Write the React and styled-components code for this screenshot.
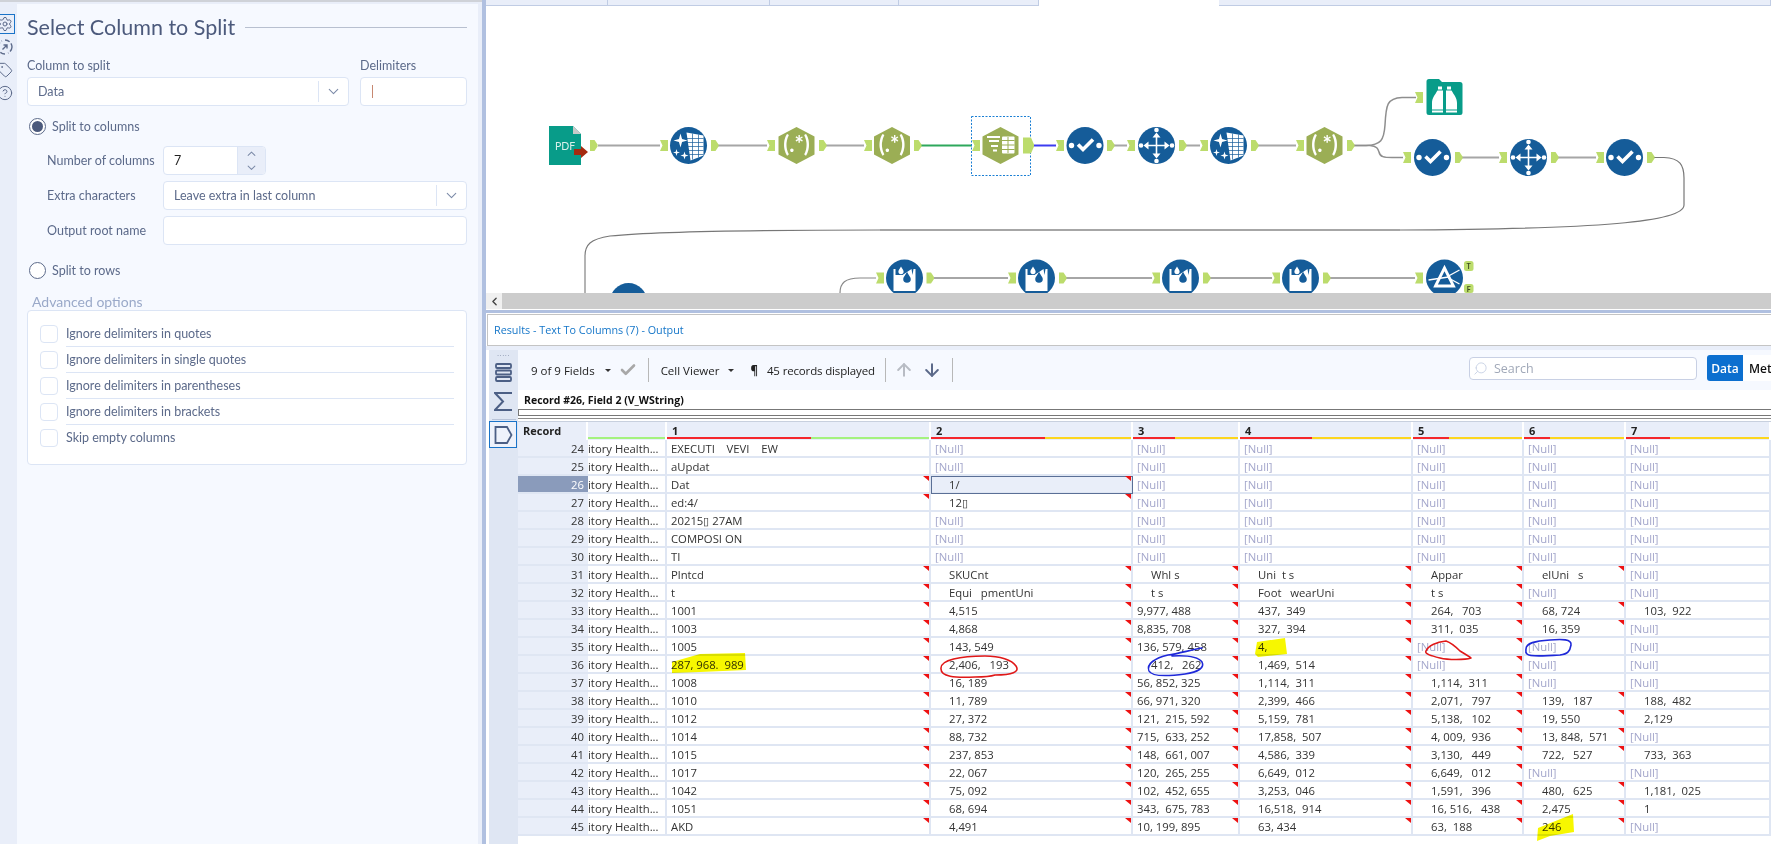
import React from 'react';
import styled, { createGlobalStyle } from 'styled-components';
import { ArrowDown, ArrowUp, Check, ChevronDown, ChevronLeft, ChevronUp, CircleHelp, Search, Settings, Tag } from 'lucide-react';

const GlobalStyle = createGlobalStyle`
  html, body { margin: 0; padding: 0; background: #fff; }
  * { box-sizing: border-box; }
`;

const Page = styled.div`
  position: relative;
  display: flex;
  width: 1771px;
  height: 844px;
  overflow: hidden;
  background: #fff;
`;

/* ---------- left config panel ---------- */
const LeftPane = styled.div`
  display: flex;
  flex: 0 0 482px;
  background: #e9eef9;
  border-top: 2px solid #cfd2d8;
  font-family: Lato, sans-serif;
  color: #5c6a8a;
`;

const Rail = styled.div`
  flex: 0 0 17px;
  display: flex;
  flex-direction: column;
  align-items: flex-start;
  padding-top: 12px;
  gap: 3px;
  color: #5c6a8a;
`;

const RailIcon = styled.div`
  width: 15px;
  height: 20px;
  display: flex;
  align-items: center;
  justify-content: flex-start;
  overflow: hidden;
  border: ${({ $active }) => ($active ? '1px solid #1a73c8' : '1px solid transparent')};
  border-left: none;
  svg { flex-shrink: 0; margin-left: -3px; }
`;

const Settings2 = styled.div`
  flex: 0 0 461px;
  margin-top: 2px;
  padding: 8px 11px 0 10px;
  background: #f6f9ff;
`;

const TitleRow = styled.div`
  display: flex;
  align-items: center;
  gap: 10px;
  height: 30px;
`;

const Title = styled.h1`
  margin: 0;
  font-size: 21.5px;
  font-weight: 400;
  color: #4c5a7c;
  white-space: nowrap;
`;

const TitleLine = styled.div`
  flex: 1;
  height: 1px;
  background: #b8c0d0;
`;

const TopRow = styled.div`
  display: grid;
  grid-template-columns: 322px 107px;
  column-gap: 11px;
  margin-top: 16px;
`;

const FieldLabel = styled.div`
  height: 16px;
  margin-bottom: 3px;
  font-size: 12.5px;
  line-height: 16px;
`;

const Control = styled.div`
  display: flex;
  align-items: center;
  height: 29px;
  background: #fff;
  border: 1px solid #dce5f5;
  border-radius: 4px;
  font-size: 12.5px;
  color: #5c6a8a;
  overflow: hidden;
`;

const ControlText = styled.span`
  flex: 1;
  padding-left: 10px;
`;

const Caret = styled.span`
  color: #c0795f;
  font-weight: 400;
`;

const SelectArrow = styled.div`
  flex: 0 0 30px;
  height: 21px;
  display: flex;
  align-items: center;
  justify-content: center;
  border-left: 1px solid #dce5f5;
  color: #7c8ba8;
`;

const RadioRow = styled.div`
  display: flex;
  align-items: center;
  gap: 6px;
  height: 17px;
  margin-top: ${({ $top }) => $top}px;
  padding-left: 2px;
  font-size: 12.5px;
`;

const Radio = styled.span`
  width: 17px;
  height: 17px;
  display: flex;
  align-items: center;
  justify-content: center;
  border: 1px solid #5c6a8a;
  border-radius: 50%;
  background: #fff;
  &::after {
    content: '';
    display: ${({ $on }) => ($on ? 'block' : 'none')};
    width: 11px;
    height: 11px;
    border-radius: 50%;
    background: #4c5a7c;
  }
`;

const OptionGrid = styled.div`
  display: grid;
  grid-template-columns: 116px 1fr;
  row-gap: 6px;
  align-items: center;
  margin-top: 11px;
  padding-left: 20px;
  font-size: 12.5px;
`;

const SpinWrap = styled(Control)`
  width: 103px;
`;

const SpinButtons = styled.div`
  flex: 0 0 28px;
  height: 100%;
  display: flex;
  flex-direction: column;
  align-items: center;
  justify-content: space-around;
  background: #e9eef9;
  border-left: 1px solid #dce5f5;
  color: #7c8ba8;
`;

const SevenText = styled(ControlText)`
  color: #222;
`;

const AdvancedLabel = styled.div`
  height: 16px;
  margin-top: 15px;
  padding-left: 5px;
  font-size: 14px;
  line-height: 16px;
  color: #9aa9c9;
`;

const AdvancedBox = styled.div`
  height: 155px;
  padding: 10px 12px 0;
  background: #fff;
  border: 1px solid #dce5f5;
  border-radius: 4px;
`;

const CheckRow = styled.div`
  display: flex;
  align-items: center;
  gap: 8px;
  height: 26px;
  font-size: 12.5px;
`;

const CheckBox = styled.span`
  flex: 0 0 18px;
  height: 18px;
  border: 1px solid #dce5f5;
  border-radius: 4px;
  background: #fff;
`;

const CheckLabel = styled.div`
  flex: 1;
  height: 26px;
  line-height: 25px;
  border-bottom: ${({ $last }) => ($last ? 'none' : '1px solid #dce5f5')};
`;

const PaneSplit = styled.div`
  flex: 0 0 4px;
  background: #b0c0e0;
`;

/* ---------- right side ---------- */
const RightPane = styled.div`
  flex: 1;
  display: flex;
  flex-direction: column;
  min-width: 0;
`;

const TabStrip = styled.div`
  display: flex;
  height: 6px;
  flex: 0 0 6px;
`;

const Tab = styled.div`
  flex: ${({ $w }) => ($w ? `0 0 ${$w}px` : '1')};
  background: ${({ $active }) => ($active ? '#fff' : '#e9eef9')};
  border-bottom: ${({ $active }) => ($active ? 'none' : '1px solid #c0cce4')};
  border-right: ${({ $active }) => ($active ? 'none' : '1px solid #c0cce4')};
`;

const CanvasSvg = styled.svg`
  display: block;
  flex: 0 0 287px;
  width: 1285px;
  height: 287px;
`;

const HScroll = styled.div`
  display: flex;
  flex: 0 0 16px;
  background: #ccc;
`;

const HScrollBtn = styled.div`
  flex: 0 0 16px;
  display: flex;
  align-items: center;
  justify-content: center;
  background: #f0f0f0;
  color: #444;
`;

const HSplit = styled.div`
  flex: 0 0 3px;
  margin-top: 1px;
  background: #b0c0e0;
`;

const ResultsTitle = styled.div`
  flex: 0 0 32px;
  margin: 1px 0 0 1px;
  padding-left: 6px;
  border-top: 1px solid #c4c4c4;
  border-left: 1px solid #c4c4c4;
  border-bottom: 1px solid #c4c4c4;
  font-family: "Open Sans", sans-serif;
  font-size: 10.8px;
  line-height: 30px;
  color: #1576c9;
`;

const ResultsBody = styled.div`
  flex: 1;
  display: flex;
  padding-left: 3px;
  border-top: 4px solid #e9eef9;
  min-height: 0;
  font-family: "Open Sans", sans-serif;
`;

const SideRail = styled.div`
  flex: 0 0 29px;
  display: flex;
  flex-direction: column;
  align-items: center;
  background: #dfe6f3;
  color: #4c5f85;
`;

const Grip = styled.div`
  width: 18px;
  height: 10px;
  font-size: 8px;
  line-height: 6px;
  letter-spacing: 0.5px;
  color: #8a96ae;
  text-align: center;
  overflow: hidden;
`;

const SideBtn = styled.div`
  width: 28px;
  height: ${({ $h }) => $h}px;
  margin-left: ${({ $active }) => ($active ? '-1px' : '0')};
  display: flex;
  align-items: center;
  justify-content: center;
  border: ${({ $active }) => ($active ? '1px solid #1a73c8' : 'none')};
  background: ${({ $active }) => ($active ? '#eef2fb' : 'transparent')};
`;

const SideSep = styled.div`
  width: 24px;
  height: 1px;
  margin: 1px 0;
  background: #b8c3d8;
`;

const ResultsMain = styled.div`
  flex: 1;
  min-width: 0;
  display: flex;
  flex-direction: column;
`;

const Toolbar = styled.div`
  flex: 0 0 40px;
  display: flex;
  align-items: center;
  padding-left: 13px;
  background: #f6f9ff;
  font-size: 11.5px;
  color: #222;
  overflow: hidden;
`;

const ToolText = styled.span`
  margin-left: ${({ $ml }) => $ml || 0}px;
  letter-spacing: ${({ $tight }) => ($tight ? '-0.15px' : 'normal')};
  font-weight: ${({ $bold }) => ($bold ? 700 : 400)};
  white-space: nowrap;
`;

const MiniCaret = styled.span`
  width: 0;
  height: 0;
  margin-left: ${({ $ml }) => $ml}px;
  border-left: 3px solid transparent;
  border-right: 3px solid transparent;
  border-top: 3px solid #333;
`;

const ToolDivider = styled.div`
  width: 1px;
  height: 24px;
  margin-left: ${({ $ml }) => $ml}px;
  background: #b8b8b8;
`;

const ToolIcon = styled.span`
  display: flex;
  margin-left: ${({ $ml }) => $ml}px;
  color: ${({ $color }) => $color};
`;

const ToolRight = styled.div`
  flex-shrink: 0;
  display: flex;
  align-items: center;
  margin: -4px -12px 0 auto;
`;

const SearchBox = styled.div`
  width: 228px;
  height: 23px;
  display: flex;
  align-items: center;
  gap: 6px;
  padding-left: 3px;
  background: #fff;
  border: 1px solid #c8d0e4;
  border-radius: 4px;
  color: #a0a8b8;
  font-size: 12.5px;
  svg { color: #cdd6e8; transform: scaleX(-1); }
`;

const ViewBtn = styled.div`
  height: 26px;
  width: ${({ $w }) => $w}px;
  margin-left: ${({ $ml }) => $ml || 0}px;
  display: flex;
  align-items: center;
  justify-content: ${({ $on }) => ($on ? 'center' : 'flex-start')};
  padding-left: ${({ $on }) => ($on ? 0 : 6)}px;
  background: ${({ $on }) => ($on ? '#0c6fcf' : '#fff')};
  border-radius: ${({ $on }) => ($on ? '3px 0 0 3px' : '0')};
  color: ${({ $on }) => ($on ? '#fff' : '#111')};
  font-size: 12px;
  font-weight: 600;
`;

const CellViewer = styled.div`
  flex: 0 0 31px;
  background: #fff;
`;

const CellCaption = styled.div`
  height: 19px;
  padding-left: 6px;
  font-size: 10.5px;
  font-weight: 700;
  line-height: 20px;
  color: #111;
`;

const CellBar = styled.div`
  height: 7px;
  background: #fff;
  border: 1px solid #777;
  border-right: none;
`;

const CellRule = styled.div`
  height: 1px;
  margin-top: 2px;
  background: #8a8a8a;
`;

const GRID_COLS = '70px 79px 264px 202px 107px 173px 111px 102px 145px';

const HeadRow = styled.div`
  flex: 0 0 19px;
  display: grid;
  grid-template-columns: ${GRID_COLS};
  background: #fff;
  border-top: 1px solid #c8d0de;
`;

const HeadCell = styled.div`
  position: relative;
  height: 18px;
  padding-left: ${({ $pad }) => $pad}px;
  margin-right: 2px;
  background: #e9eef9;
  font-size: 11px;
  font-weight: 700;
  line-height: 17px;
  color: #222;
`;

const Bar = styled.div`
  position: absolute;
  left: 0;
  right: 0;
  bottom: 1px;
  height: 2px;
  background: linear-gradient(
    to right,
    #f5262c ${({ $red }) => $red}%,
    ${({ $rest }) => $rest} ${({ $red }) => $red}%
  );
`;

const GridBody = styled.div`
  flex: 1;
  display: grid;
  grid-template-columns: ${GRID_COLS};
  grid-auto-rows: 18px;
  font-size: 11.3px;
  color: #333;
`;

const RecordCell = styled.div`
  padding-right: 4px;
  background: ${({ $sel }) => ($sel ? '#8a9bbb' : '#e9eef9')};
  color: ${({ $sel }) => ($sel ? '#fff' : '#333')};
  border-bottom: 2px solid #dfe6f3;
  text-align: right;
  line-height: 18px;
`;

const DataCell = styled.div`
  position: relative;
  padding-left: ${({ $pad }) => $pad}px;
  background: ${({ $sel }) => ($sel ? '#e9eef9' : '#fff')};
  border-right: 2px solid #dfe6f3;
  border-bottom: 2px solid #dfe6f3;
  outline: ${({ $sel }) => ($sel ? '1px solid #5a6f96' : 'none')};
  outline-offset: -1px;
  color: ${({ $null }) => ($null ? '#a3a6cb' : '#333')};
  line-height: 18px;
  white-space: pre;
  overflow: hidden;
`;

const SourceCell = styled(DataCell)`
  text-indent: -2px;
`;

const Flag = styled.span`
  position: absolute;
  top: 0;
  right: 0;
  width: 0;
  height: 0;
  border-top: 5px solid #ee1111;
  border-left: 6px solid transparent;
`;

const Overlay = styled.svg`
  position: absolute;
  top: 0;
  left: 0;
  pointer-events: none;
`;

const YellowMark = styled.path`
  fill: #f7f700;
  mix-blend-mode: multiply;
`;

const PenMark = styled.path`
  fill: none;
  stroke: ${({ $color }) => $color};
  stroke-width: 1.6;
  stroke-linecap: round;
  stroke-linejoin: round;
`;

/* ---------- workflow drawing ---------- */
const GREEN = '#bcdc6c';
const BLUE = '#155c99';
const OLIVE = '#9bae55';
const WIRE = '#a6a6a6';

const InAnchor = ({ x, y }) => (
  <path d={`M${x} ${y - 5.5}H${x + 8}V${y + 5.5}H${x}L${x + 2.5} ${y}Z`} fill={GREEN} />
);

const OutAnchor = ({ x, y, big }) => {
  const h = big ? 8 : 5.5;
  const w = big ? 11 : 7.5;
  return <path d={`M${x} ${y - h}H${x + w - 3}L${x + w} ${y - 1}V${y + 1}L${x + w - 3} ${y + h}H${x}Z`} fill={GREEN} />;
};

const Wire = ({ d, color = WIRE, w = 2 }) => <path d={d} fill="none" stroke={color} strokeWidth={w} />;

const Circle = ({ cx, cy, children }) => (
  <g>
    <circle cx={cx} cy={cy} r="18.5" fill={BLUE} />
    {children}
  </g>
);

const Hex = ({ cx, cy, children }) => (
  <g>
    <polygon points={`${cx},${cy - 18.5} ${cx + 18},${cy - 9} ${cx + 18},${cy + 9} ${cx},${cy + 18.5} ${cx - 18},${cy + 9} ${cx - 18},${cy - 9}`} fill={OLIVE} />
    {children}
  </g>
);

const Formula = ({ cx, cy }) => (
  <Hex cx={cx} cy={cy}>
    <text x={cx} y={cy + 6} textAnchor="middle" fontFamily="Lato, sans-serif" fontSize="22" fontWeight="700" fill="#fff">(.*)</text>
  </Hex>
);

const Sparkle = ({ x, y, s }) => (
  <path d={`M${x} ${y - s}L${x + s * 0.22} ${y - s * 0.22}L${x + s} ${y}L${x + s * 0.22} ${y + s * 0.22}L${x} ${y + s}L${x - s * 0.22} ${y + s * 0.22}L${x - s} ${y}L${x - s * 0.22} ${y - s * 0.22}Z`} fill="#fff" />
);

const CleanseTable = ({ cx, cy }) => (
  <Circle cx={cx} cy={cy}>
    <Sparkle x={cx - 8} y={cy - 5} s={7} />
    <Sparkle x={cx - 12} y={cy + 7} s={3.5} />
    <Sparkle x={cx - 4} y={cy + 10} s={4} />
    <path d={`M${cx - 2} ${cy - 13}L${cx + 15} ${cy - 10}V${cy + 10}L${cx + 2} ${cy + 15}Z`} fill="#fff" />
    {[-7, -3, 1, 5, 9].map((o) => (
      <path key={o} d={`M${cx - 2} ${cy + o}H${cx + 15}`} stroke={BLUE} strokeWidth="0.7" />
    ))}
    <path d={`M${cx + 4} ${cy - 12}V${cy + 14}M${cx + 10} ${cy - 11}V${cy + 12}`} stroke={BLUE} strokeWidth="0.7" />
  </Circle>
);

const SelectNode = ({ cx, cy }) => (
  <Circle cx={cx} cy={cy}>
    <circle cx={cx - 13.5} cy={cy} r="2.7" fill="#fff" />
    <circle cx={cx + 14} cy={cy} r="2.7" fill="#fff" />
    <path d={`M${cx - 7} ${cy - 1}L${cx - 2} ${cy + 4}L${cx + 8} ${cy - 6}`} fill="none" stroke="#fff" strokeWidth="3.6" />
  </Circle>
);

const MoveNode = ({ cx, cy }) => (
  <Circle cx={cx} cy={cy}>
    <path d={`M${cx} ${cy - 11}V${cy + 11}M${cx - 11} ${cy}H${cx + 11}`} stroke="#fff" strokeWidth="1.6" />
    <path d={`M${cx - 4} ${cy - 8}L${cx} ${cy - 13}L${cx + 4} ${cy - 8}ZM${cx - 4} ${cy + 8}L${cx} ${cy + 13}L${cx + 4} ${cy + 8}ZM${cx - 8} ${cy - 4}L${cx - 13} ${cy}L${cx - 8} ${cy + 4}ZM${cx + 8} ${cy - 4}L${cx + 13} ${cy}L${cx + 8} ${cy + 4}Z`} fill="#fff" />
    <circle cx={cx} cy={cy - 15.5} r="2.3" fill="#fff" />
    <circle cx={cx} cy={cy + 15.5} r="2.3" fill="#fff" />
    <circle cx={cx - 15.5} cy={cy} r="2.3" fill="#fff" />
    <circle cx={cx + 15.5} cy={cy} r="2.3" fill="#fff" />
  </Circle>
);

const Drop = ({ x, y, s, fill }) => (
  <path d={`M${x} ${y - s * 1.5}C${x + s * 0.4} ${y - s * 0.6} ${x + s} ${y - s * 0.1} ${x + s} ${y + s * 0.4}A${s} ${s} 0 0 1 ${x - s} ${y + s * 0.4}C${x - s} ${y - s * 0.1} ${x - s * 0.4} ${y - s * 0.6} ${x} ${y - s * 1.5}Z`} fill={fill} />
);

const WaterNode = ({ cx, cy }) => (
  <Circle cx={cx} cy={cy}>
    <path d={`M${cx - 11} ${cy - 9}H${cx - 9}V${cy - 3}H${cx - 2}L${cx + 7} ${cy - 9}L${cx + 8} ${cy - 3}L${cx + 9} ${cy - 9}H${cx + 11}V${cy + 13}H${cx - 11}Z`} fill="#fff" />
    <Drop x={cx - 3.5} y={cy - 7.5} s={2.6} fill="#fff" />
    <Drop x={cx + 2.5} y={cy - 0.5} s={3.8} fill={BLUE} />
  </Circle>
);

const FilterNode = ({ cx, cy }) => (
  <Circle cx={cx} cy={cy}>
    <path d={`M${cx - 9} ${cy + 8}L${cx} ${cy - 10}L${cx + 9} ${cy + 8}Z`} fill="none" stroke="#fff" strokeWidth="2.8" />
    <path d={`M${cx - 16} ${cy + 2}L${cx + 4} ${cy - 1}M${cx + 4} ${cy - 2}L${cx + 15} ${cy - 8}M${cx + 4} ${cy}L${cx + 15} ${cy + 6}`} stroke="#fff" strokeWidth="1.4" />
  </Circle>
);

const Workflow = () => (
  <CanvasSvg viewBox="486 6 1285 287">
    <Wire d="M598 145.5H660M718 145.5H767M826 145.5H864M1114 145.5H1127M1186 145.5H1200M1258 145.5H1296" />
    <Wire d="M921 145.5H972" color="#2ea85c" />
    <Wire d="M1034 145.5H1056" color="#3c3cf0" />
    <Wire d="M1354 145.5H1366C1381 145 1384 140 1385 125C1386 105 1387 98 1402 97.5H1416" w={1.5} color="#8e8e8e" />
    <Wire d="M1354 145.5H1370C1377 146 1378 149 1379 152C1380 157 1384 157.5 1392 157.5H1403" w={1.5} color="#8e8e8e" />
    <Wire d="M1462 157.5H1499M1558 157.5H1596" />
    <Wire d="M1654 157.5H1664C1680 158 1684 165 1684 178V205C1684 222 1600 229 1400 230" w={1.2} color="#777" />
    <Wire d="M1400 230H880" />
    <Wire d="M880 230C700 230 640 233 610 236C590 239 585 245 585 256V293" w={1.1} color="#777" />
    <Wire d="M840 293C840 283 845 278 860 278H876" w={1.2} color="#888" />
    <Wire d="M933 278H1008M1065 278H1152M1209 278H1272M1329 278H1415" />

    <path d="M549 126H573L581 134V165H549Z" fill="#089c89" />
    <path d="M573 126L581 134H573Z" fill="#c9c9c9" />
    <text x="555" y="150" fontFamily="Lato, sans-serif" fontSize="10.5" fill="#d8f0ea">PDF</text>
    <path d="M574 149H581V146L588 152L581 158V155H574Z" fill="#a52a10" />
    <OutAnchor x={590} y={145.5} />

    <InAnchor x={660} y={145.5} />
    <CleanseTable cx={688.5} cy={145.5} />
    <OutAnchor x={711} y={145.5} />

    <InAnchor x={767} y={145.5} />
    <Formula cx={796.5} cy={145.5} />
    <OutAnchor x={819} y={145.5} />

    <InAnchor x={864} y={145.5} />
    <Formula cx={892} cy={145.5} />
    <OutAnchor x={914} y={145.5} />

    <rect x="971.5" y="116.5" width="59" height="59" fill="none" stroke="#1a7fd4" strokeDasharray="2 1.5" />
    <InAnchor x={972} y={145.5} />
    <Hex cx={1000.5} cy={145.5}>
      <path d="M987 137H1000M989 141H999M991 146H998M993 150.5H997" stroke="#fff" strokeWidth="2" />
      <rect x="1002" y="136.5" width="12.5" height="17" rx="1" fill="#fff" />
      <path d="M1002 140.5H1014.5M1002 145H1014.5M1002 149.5H1014.5M1008 137V153" stroke={OLIVE} strokeWidth="1" />
    </Hex>
    <OutAnchor x={1023} y={145.5} big />

    <InAnchor x={1056} y={145.5} />
    <SelectNode cx={1085} cy={145.5} />
    <OutAnchor x={1107} y={145.5} />

    <InAnchor x={1127} y={145.5} />
    <MoveNode cx={1156.5} cy={145.5} />
    <OutAnchor x={1179} y={145.5} />

    <InAnchor x={1200} y={145.5} />
    <CleanseTable cx={1228.5} cy={145.5} />
    <OutAnchor x={1251} y={145.5} />

    <InAnchor x={1296} y={145.5} />
    <Formula cx={1324.5} cy={145.5} />
    <OutAnchor x={1347} y={145.5} />

    <InAnchor x={1415} y={97.5} />
    <path d="M1429 79H1439L1442 82H1460A2.5 2.5 0 0 1 1462.5 84.5V112.5A2.5 2.5 0 0 1 1460 115H1429A2.5 2.5 0 0 1 1426.5 112.5V81.5A2.5 2.5 0 0 1 1429 79Z" fill="#089c89" />
    <path d="M1438 86.5H1442V89.5H1438ZM1447 86.5H1451V89.5H1447Z" fill="#fff" />
    <path d="M1437.5 90.5H1443V109.5H1432V103C1432 98 1435 95 1437.5 90.5ZM1451.5 90.5H1446V109.5H1457V103C1457 98 1454 95 1451.5 90.5Z" fill="#fff" />
    <path d="M1432 110.5H1443V112.5H1432ZM1446 110.5H1457V112.5H1446Z" fill="#fff" />

    <InAnchor x={1403} y={157.5} />
    <SelectNode cx={1432.5} cy={157.5} />
    <OutAnchor x={1455} y={157.5} />
    <InAnchor x={1499} y={157.5} />
    <MoveNode cx={1528.5} cy={157.5} />
    <OutAnchor x={1551} y={157.5} />
    <InAnchor x={1596} y={157.5} />
    <SelectNode cx={1624.5} cy={157.5} />
    <OutAnchor x={1647} y={157.5} />

    <circle cx="628.5" cy="301.5" r="18.5" fill={BLUE} />

    <InAnchor x={876} y={278} />
    <WaterNode cx={904.5} cy={278} />
    <OutAnchor x={926.5} y={278} />
    <InAnchor x={1008} y={278} />
    <WaterNode cx={1036.5} cy={278} />
    <OutAnchor x={1059} y={278} />
    <InAnchor x={1152} y={278} />
    <WaterNode cx={1180.5} cy={278} />
    <OutAnchor x={1203} y={278} />
    <InAnchor x={1272} y={278} />
    <WaterNode cx={1300.5} cy={278} />
    <OutAnchor x={1323} y={278} />
    <InAnchor x={1415} y={278} />
    <FilterNode cx={1444.5} cy={278} />
    <rect x="1464" y="261" width="9.5" height="10" rx="2.5" fill={GREEN} />
    <text x="1468.7" y="269" textAnchor="middle" fontFamily="Lato, sans-serif" fontSize="7" fontWeight="700" fill="#3c4a20">T</text>
    <rect x="1464" y="284" width="9.5" height="9" rx="2.5" fill={GREEN} />
    <text x="1468.7" y="292" textAnchor="middle" fontFamily="Lato, sans-serif" fontSize="7" fontWeight="700" fill="#3c4a20">F</text>
  </CanvasSvg>
);

const Scribbles = () => (
  <Overlay width="1771" height="844" viewBox="0 0 1771 844">
    <YellowMark d="M672 662L700 654L745 653L746 670L700 672L672 673Z" />
    <YellowMark d="M1257 642L1285 638L1287 654L1258 657L1255 654Z" />
    <YellowMark d="M1538 828L1573 814L1574 832L1550 836L1537 841Z" />
    <PenMark $color="#e01818" d="M941 668C941 660 960 656 985 656C1000 656 1012 660 1016 666C1020 672 1012 675 995 675C992 676 985 677 975 677C955 678 940 677 941 668" />
    <PenMark $color="#e01818" d="M1426 651C1428 646 1436 642 1446 641C1452 643 1456 647 1460 651C1465 654 1470 657 1471 658C1465 660 1448 660 1440 658C1432 656 1424 654 1426 651" />
    <PenMark $color="#1e28d8" d="M1202 648C1190 650 1178 654 1168 655C1155 658 1146 664 1149 671C1152 677 1170 676 1185 674C1198 672 1205 668 1202 662C1199 658 1190 655 1172 656" />
    <PenMark $color="#1e28d8" d="M1526 649C1526 643 1535 641 1550 640C1562 639 1572 639 1571 645C1570 651 1568 654 1560 655C1545 656 1530 657 1527 654C1525 652 1526 650 1526 649" />
  </Overlay>
);

/* ---------- data ---------- */
const NA = null;
const TABLE = [
  [24, 'EXECUTI    VEVI    EW', NA, NA, NA, NA, NA, NA],
  [25, 'aUpdat', NA, NA, NA, NA, NA, NA],
  [26, 'Dat', '~1/', NA, NA, NA, NA, NA],
  [27, 'ed:4/', '~12\u25AF', NA, NA, NA, NA, NA],
  [28, '20215\u25AF 27AM', NA, NA, NA, NA, NA, NA],
  [29, 'COMPOSI ON', NA, NA, NA, NA, NA, NA],
  [30, 'TI', NA, NA, NA, NA, NA, NA],
  [31, 'Plntcd', '~SKUCnt', '~Whl s', '~Uni  t s', '~Appar', '~elUni   s', NA],
  [32, 't', '~Equi   pmentUni', '~t s', '~Foot   wearUni', '~t s', NA, NA],
  [33, '1001', '~4,515', '9,977, 488', '~437,  349', '~264,   703', '~68, 724', '~103,  922'],
  [34, '1003', '~4,868', '8,835, 708', '~327,  394', '~311,  035', '~16, 359', NA],
  [35, '1005', '~143, 549', '136, 579, 458', '~4,', NA, NA, NA],
  [36, '287, 968.  989', '~2,406,   193', '~412,   262', '~1,469,  514', NA, NA, NA],
  [37, '1008', '~16, 189', '56, 852, 325', '~1,114,  311', '~1,114,  311', NA, NA],
  [38, '1010', '~11, 789', '66, 971, 320', '~2,399,  466', '~2,071,   797', '~139,   187', '~188,  482'],
  [39, '1012', '~27, 372', '121,  215, 592', '~5,159,  781', '~5,138,   102', '~19, 550', '~2,129'],
  [40, '1014', '~88, 732', '715,  633, 252', '~17,858,  507', '~4, 009,  936', '~13, 848,  571', NA],
  [41, '1015', '~237, 853', '148,  661, 007', '~4,586,  339', '~3,130,   449', '~722,   527', '~733,  363'],
  [42, '1017', '~22, 067', '120,  265, 255', '~6,649,  012', '~6,649,   012', NA, NA],
  [43, '1042', '~75, 092', '102,  452, 655', '~3,253,  046', '~1,591,   396', '~480,   625', '~1,181,  025'],
  [44, '1051', '~68, 694', '343,  675, 783', '~16,518,  914', '~16, 516,   438', '~2,475', '~1'],
  [45, 'AKD', '~4,491', '10, 199, 895', '~63, 434', '~63,  188', '~246', NA],
];

const FLAGGED_COL6 = [31, 33, 34, 38, 39, 40, 41, 43, 44, 45];

const hasFlag = (row, col) => {
  if (col === 1 || col === 2) return row === 26 || row === 27 || row >= 31;
  if (col >= 3 && col <= 5) return row >= 31;
  if (col === 6) return FLAGGED_COL6.includes(row);
  return false;
};

const HEADS = [
  { label: '', red: 0, rest: '#a4f27e' },
  { label: '1', red: 55, rest: '#a4f27e' },
  { label: '2', red: 57, rest: '#fcd61e' },
  { label: '3', red: 40, rest: '#fcd61e' },
  { label: '4', red: 42, rest: '#fcd61e' },
  { label: '5', red: 33, rest: '#fcd61e' },
  { label: '6', red: 26, rest: '#fcd61e' },
  { label: '7', red: 31, rest: '#fcd61e' },
];

const OPTIONS = [
  'Ignore delimiters in quotes',
  'Ignore delimiters in single quotes',
  'Ignore delimiters in parentheses',
  'Ignore delimiters in brackets',
  'Skip empty columns',
];

const StackIcon = () => (
  <svg width="17" height="19" viewBox="0 0 17 19" fill="none" stroke="currentColor" strokeWidth="1.8">
    <rect x="1" y="1" width="15" height="4" rx="1" />
    <rect x="1" y="7.5" width="15" height="4" rx="1" />
    <rect x="1" y="14" width="15" height="4" rx="1" />
  </svg>
);

const SigmaIcon = () => (
  <svg width="19" height="19" viewBox="0 0 19 19" fill="none" stroke="currentColor" strokeWidth="2">
    <path d="M18 1H1L9 9.5L1 18H18" />
  </svg>
);

const ShapeIcon = () => (
  <svg width="19" height="20" viewBox="0 0 19 20" fill="none" stroke="currentColor" strokeWidth="1.8">
    <path d="M1.5 2H13L17.5 10L13 18H1.5Z" />
  </svg>
);

const JumpIcon = () => (
  <svg width="16" height="16" viewBox="0 0 16 16" fill="none" stroke="currentColor" strokeWidth="1.4">
    <path d="M8 1A7 7 0 0 1 15 8M15 8A7 7 0 0 1 11 14M8 15A7 7 0 0 1 3 13M1 8A7 7 0 0 1 5 2" strokeDasharray="5 2" />
    <path d="M5.5 10.5L10 6M6.5 6H10V9.5" />
  </svg>
);

export default function App() {
  return (
    <Page>
      <GlobalStyle />
      <LeftPane>
        <Rail>
          <RailIcon $active><Settings size={16} strokeWidth={1.5} /></RailIcon>
          <RailIcon><JumpIcon /></RailIcon>
          <RailIcon><Tag size={16} strokeWidth={1.5} /></RailIcon>
          <RailIcon><CircleHelp size={16} strokeWidth={1.5} /></RailIcon>
        </Rail>
        <Settings2>
          <TitleRow>
            <Title>Select Column to Split</Title>
            <TitleLine />
          </TitleRow>
          <TopRow>
            <div>
              <FieldLabel>Column to split</FieldLabel>
              <Control>
                <ControlText>Data</ControlText>
                <SelectArrow><ChevronDown size={17} strokeWidth={1.5} /></SelectArrow>
              </Control>
            </div>
            <div>
              <FieldLabel>Delimiters</FieldLabel>
              <Control>
                <ControlText><Caret>|</Caret></ControlText>
              </Control>
            </div>
          </TopRow>
          <RadioRow $top={12}>
            <Radio $on />
            Split to columns
          </RadioRow>
          <OptionGrid>
            <span>Number of columns</span>
            <SpinWrap>
              <SevenText>7</SevenText>
              <SpinButtons>
                <ChevronUp size={15} strokeWidth={1.8} />
                <ChevronDown size={15} strokeWidth={1.8} />
              </SpinButtons>
            </SpinWrap>
            <span>Extra characters</span>
            <Control>
              <ControlText>Leave extra in last column</ControlText>
              <SelectArrow><ChevronDown size={17} strokeWidth={1.5} /></SelectArrow>
            </Control>
            <span>Output root name</span>
            <Control />
          </OptionGrid>
          <RadioRow $top={17}>
            <Radio />
            Split to rows
          </RadioRow>
          <AdvancedLabel>Advanced options</AdvancedLabel>
          <AdvancedBox>
            {OPTIONS.map((opt, i) => (
              <CheckRow key={opt}>
                <CheckBox />
                <CheckLabel $last={i === OPTIONS.length - 1}>{opt}</CheckLabel>
              </CheckRow>
            ))}
          </AdvancedBox>
        </Settings2>
      </LeftPane>
      <PaneSplit />
      <RightPane>
        <TabStrip>
          <Tab $w={122} />
          <Tab $w={162} />
          <Tab $w={129} />
          <Tab $w={140} />
          <Tab $w={180} $active />
          <Tab />
        </TabStrip>
        <Workflow />
        <HScroll>
          <HScrollBtn><ChevronLeft size={13} strokeWidth={2.5} /></HScrollBtn>
        </HScroll>
        <HSplit />
        <ResultsTitle>Results - Text To Columns (7) - Output</ResultsTitle>
        <ResultsBody>
          <SideRail>
            <Grip>.....</Grip>
            <SideBtn $h={24}><StackIcon /></SideBtn>
            <SideBtn $h={34}><SigmaIcon /></SideBtn>
            <SideSep />
            <SideBtn $h={27} $active><ShapeIcon /></SideBtn>
          </SideRail>
          <ResultsMain>
            <Toolbar>
              <ToolText>9 of 9 Fields</ToolText>
              <MiniCaret $ml={10} />
              <ToolIcon $ml={8} $color="#a8a8a8"><Check size={18} strokeWidth={3.5} /></ToolIcon>
              <ToolDivider $ml={11} />
              <ToolText $ml={12}>Cell Viewer</ToolText>
              <MiniCaret $ml={9} />
              <ToolText $ml={16} $bold>¶</ToolText>
              <ToolText $ml={9} $tight>45 records displayed</ToolText>
              <ToolDivider $ml={10} />
              <ToolIcon $ml={8} $color="#b8bcc4"><ArrowUp size={20} strokeWidth={2.4} /></ToolIcon>
              <ToolIcon $ml={8} $color="#5c6a8a"><ArrowDown size={20} strokeWidth={2.4} /></ToolIcon>
              <ToolDivider $ml={10} />
              <ToolRight>
                <SearchBox>
                  <Search size={15} strokeWidth={1.6} />
                  Search
                </SearchBox>
                <ViewBtn $on $w={36} $ml={10}>Data</ViewBtn>
                <ViewBtn $w={40}>Metadata</ViewBtn>
              </ToolRight>
            </Toolbar>
            <CellViewer>
              <CellCaption>Record #26, Field 2 (V_WString)</CellCaption>
              <CellBar />
              <CellRule />
            </CellViewer>
            <HeadRow>
              <HeadCell $pad={5}>Record</HeadCell>
              {HEADS.map((h, i) => (
                <HeadCell key={i} $pad={5}>
                  {h.label}
                  <Bar $red={h.red} $rest={h.rest} />
                </HeadCell>
              ))}
            </HeadRow>
            <GridBody>
              {TABLE.map(([row, ...cells]) => (
                <React.Fragment key={row}>
                  <RecordCell $sel={row === 26}>{row}</RecordCell>
                  <SourceCell $pad={2}>itory Health...</SourceCell>
                  {cells.map((cell, idx) => {
                    const col = idx + 1;
                    const padded = cell && cell.startsWith('~');
                    return (
                      <DataCell key={col} $pad={padded ? 18 : 4} $null={cell === null} $sel={row === 26 && col === 2}>
                        {cell === null ? '[Null]' : cell.replace('~', '')}
                        {hasFlag(row, col) && <Flag />}
                      </DataCell>
                    );
                  })}
                </React.Fragment>
              ))}
            </GridBody>
          </ResultsMain>
        </ResultsBody>
      </RightPane>
      <Scribbles />
    </Page>
  );
}
